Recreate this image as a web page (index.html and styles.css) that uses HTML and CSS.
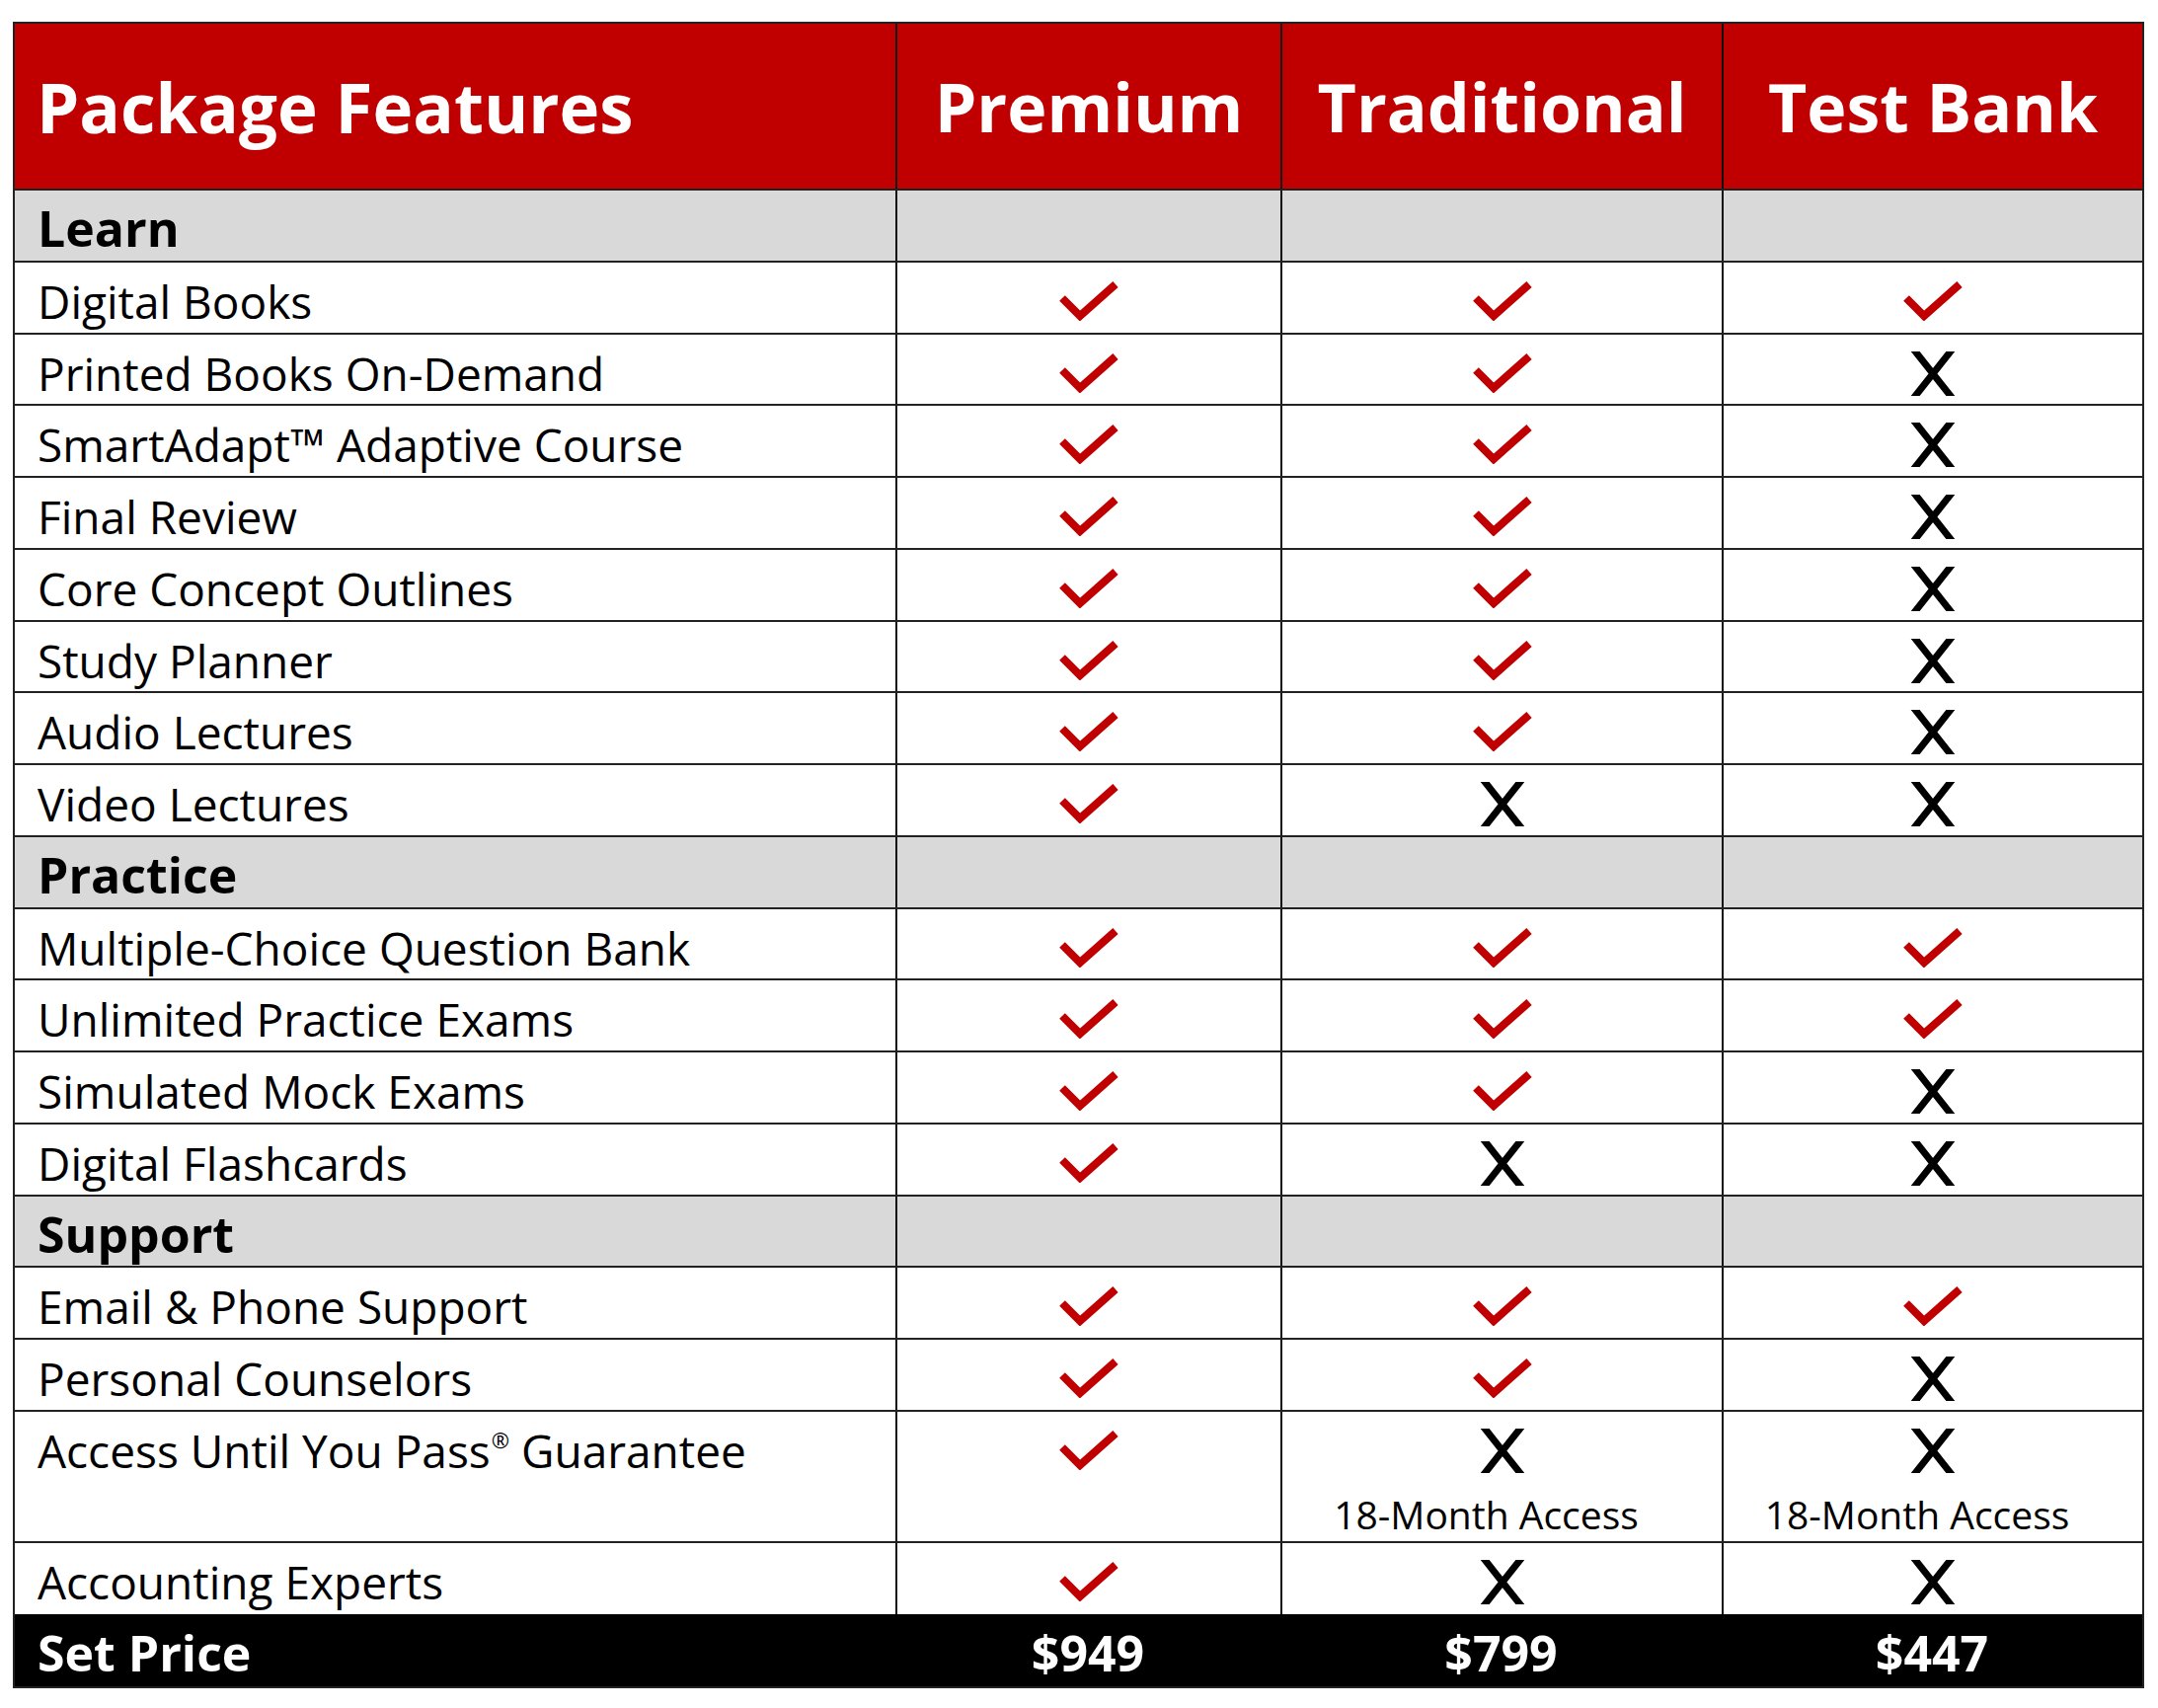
FILE: index.html
```html
<!DOCTYPE html>
<html>
<head>
<meta charset="utf-8">
<link rel="stylesheet" href="styles.css">
<title>Package Features</title>
</head>
<body>
<div class="table">
  <div class="row head">
    <div class="cell feat">Package Features</div>
    <div class="cell">Premium</div>
    <div class="cell">Traditional</div>
    <div class="cell">Test Bank</div>
  </div>

  <div class="row section"><div class="cell feat">Learn</div><div class="cell"></div><div class="cell"></div><div class="cell"></div></div>
  <div class="row"><div class="cell feat">Digital Books</div>
    <div class="cell"><svg class="check" viewBox="0 0 60 40"><path d="M3 17 L21 35 L57 3"/></svg></div>
    <div class="cell"><svg class="check" viewBox="0 0 60 40"><path d="M3 17 L21 35 L57 3"/></svg></div>
    <div class="cell"><svg class="check" viewBox="0 0 60 40"><path d="M3 17 L21 35 L57 3"/></svg></div></div>
  <div class="row"><div class="cell feat">Printed Books On-Demand</div>
    <div class="cell"><svg class="check" viewBox="0 0 60 40"><path d="M3 17 L21 35 L57 3"/></svg></div>
    <div class="cell"><svg class="check" viewBox="0 0 60 40"><path d="M3 17 L21 35 L57 3"/></svg></div>
    <div class="cell"><svg class="cross" viewBox="0 0 46 45"><path d="M2 -4 L44 49 M44 -4 L2 49"/></svg></div></div>
  <div class="row"><div class="cell feat">SmartAdapt™ Adaptive Course</div>
    <div class="cell"><svg class="check" viewBox="0 0 60 40"><path d="M3 17 L21 35 L57 3"/></svg></div>
    <div class="cell"><svg class="check" viewBox="0 0 60 40"><path d="M3 17 L21 35 L57 3"/></svg></div>
    <div class="cell"><svg class="cross" viewBox="0 0 46 45"><path d="M2 -4 L44 49 M44 -4 L2 49"/></svg></div></div>
  <div class="row"><div class="cell feat">Final Review</div>
    <div class="cell"><svg class="check" viewBox="0 0 60 40"><path d="M3 17 L21 35 L57 3"/></svg></div>
    <div class="cell"><svg class="check" viewBox="0 0 60 40"><path d="M3 17 L21 35 L57 3"/></svg></div>
    <div class="cell"><svg class="cross" viewBox="0 0 46 45"><path d="M2 -4 L44 49 M44 -4 L2 49"/></svg></div></div>
  <div class="row"><div class="cell feat">Core Concept Outlines</div>
    <div class="cell"><svg class="check" viewBox="0 0 60 40"><path d="M3 17 L21 35 L57 3"/></svg></div>
    <div class="cell"><svg class="check" viewBox="0 0 60 40"><path d="M3 17 L21 35 L57 3"/></svg></div>
    <div class="cell"><svg class="cross" viewBox="0 0 46 45"><path d="M2 -4 L44 49 M44 -4 L2 49"/></svg></div></div>
  <div class="row"><div class="cell feat">Study Planner</div>
    <div class="cell"><svg class="check" viewBox="0 0 60 40"><path d="M3 17 L21 35 L57 3"/></svg></div>
    <div class="cell"><svg class="check" viewBox="0 0 60 40"><path d="M3 17 L21 35 L57 3"/></svg></div>
    <div class="cell"><svg class="cross" viewBox="0 0 46 45"><path d="M2 -4 L44 49 M44 -4 L2 49"/></svg></div></div>
  <div class="row"><div class="cell feat">Audio Lectures</div>
    <div class="cell"><svg class="check" viewBox="0 0 60 40"><path d="M3 17 L21 35 L57 3"/></svg></div>
    <div class="cell"><svg class="check" viewBox="0 0 60 40"><path d="M3 17 L21 35 L57 3"/></svg></div>
    <div class="cell"><svg class="cross" viewBox="0 0 46 45"><path d="M2 -4 L44 49 M44 -4 L2 49"/></svg></div></div>
  <div class="row"><div class="cell feat">Video Lectures</div>
    <div class="cell"><svg class="check" viewBox="0 0 60 40"><path d="M3 17 L21 35 L57 3"/></svg></div>
    <div class="cell"><svg class="cross" viewBox="0 0 46 45"><path d="M2 -4 L44 49 M44 -4 L2 49"/></svg></div>
    <div class="cell"><svg class="cross" viewBox="0 0 46 45"><path d="M2 -4 L44 49 M44 -4 L2 49"/></svg></div></div>

  <div class="row section"><div class="cell feat">Practice</div><div class="cell"></div><div class="cell"></div><div class="cell"></div></div>
  <div class="row"><div class="cell feat">Multiple-Choice Question Bank</div>
    <div class="cell"><svg class="check" viewBox="0 0 60 40"><path d="M3 17 L21 35 L57 3"/></svg></div>
    <div class="cell"><svg class="check" viewBox="0 0 60 40"><path d="M3 17 L21 35 L57 3"/></svg></div>
    <div class="cell"><svg class="check" viewBox="0 0 60 40"><path d="M3 17 L21 35 L57 3"/></svg></div></div>
  <div class="row"><div class="cell feat">Unlimited Practice Exams</div>
    <div class="cell"><svg class="check" viewBox="0 0 60 40"><path d="M3 17 L21 35 L57 3"/></svg></div>
    <div class="cell"><svg class="check" viewBox="0 0 60 40"><path d="M3 17 L21 35 L57 3"/></svg></div>
    <div class="cell"><svg class="check" viewBox="0 0 60 40"><path d="M3 17 L21 35 L57 3"/></svg></div></div>
  <div class="row"><div class="cell feat">Simulated Mock Exams</div>
    <div class="cell"><svg class="check" viewBox="0 0 60 40"><path d="M3 17 L21 35 L57 3"/></svg></div>
    <div class="cell"><svg class="check" viewBox="0 0 60 40"><path d="M3 17 L21 35 L57 3"/></svg></div>
    <div class="cell"><svg class="cross" viewBox="0 0 46 45"><path d="M2 -4 L44 49 M44 -4 L2 49"/></svg></div></div>
  <div class="row"><div class="cell feat">Digital Flashcards</div>
    <div class="cell"><svg class="check" viewBox="0 0 60 40"><path d="M3 17 L21 35 L57 3"/></svg></div>
    <div class="cell"><svg class="cross" viewBox="0 0 46 45"><path d="M2 -4 L44 49 M44 -4 L2 49"/></svg></div>
    <div class="cell"><svg class="cross" viewBox="0 0 46 45"><path d="M2 -4 L44 49 M44 -4 L2 49"/></svg></div></div>

  <div class="row section"><div class="cell feat">Support</div><div class="cell"></div><div class="cell"></div><div class="cell"></div></div>
  <div class="row"><div class="cell feat">Email &amp; Phone Support</div>
    <div class="cell"><svg class="check" viewBox="0 0 60 40"><path d="M3 17 L21 35 L57 3"/></svg></div>
    <div class="cell"><svg class="check" viewBox="0 0 60 40"><path d="M3 17 L21 35 L57 3"/></svg></div>
    <div class="cell"><svg class="check" viewBox="0 0 60 40"><path d="M3 17 L21 35 L57 3"/></svg></div></div>
  <div class="row"><div class="cell feat">Personal Counselors</div>
    <div class="cell"><svg class="check" viewBox="0 0 60 40"><path d="M3 17 L21 35 L57 3"/></svg></div>
    <div class="cell"><svg class="check" viewBox="0 0 60 40"><path d="M3 17 L21 35 L57 3"/></svg></div>
    <div class="cell"><svg class="cross" viewBox="0 0 46 45"><path d="M2 -4 L44 49 M44 -4 L2 49"/></svg></div></div>
  <div class="row tall"><div class="cell feat">Access Until You Pass<sup>®</sup> Guarantee</div>
    <div class="cell"><svg class="check" viewBox="0 0 60 40"><path d="M3 17 L21 35 L57 3"/></svg></div>
    <div class="cell"><svg class="cross" viewBox="0 0 46 45"><path d="M2 -4 L44 49 M44 -4 L2 49"/></svg><span class="note">18-Month Access</span></div>
    <div class="cell"><svg class="cross" viewBox="0 0 46 45"><path d="M2 -4 L44 49 M44 -4 L2 49"/></svg><span class="note">18-Month Access</span></div></div>
  <div class="row last"><div class="cell feat">Accounting Experts</div>
    <div class="cell"><svg class="check" viewBox="0 0 60 40"><path d="M3 17 L21 35 L57 3"/></svg></div>
    <div class="cell"><svg class="cross" viewBox="0 0 46 45"><path d="M2 -4 L44 49 M44 -4 L2 49"/></svg></div>
    <div class="cell"><svg class="cross" viewBox="0 0 46 45"><path d="M2 -4 L44 49 M44 -4 L2 49"/></svg></div></div>

  <div class="row price">
    <div class="cell feat">Set Price</div>
    <div class="cell">$949</div>
    <div class="cell">$799</div>
    <div class="cell">$447</div>
  </div>
</div>
</body>
</html>
```

FILE: styles.css
```css
html, body {
  margin: 0;
  padding: 0;
  background: #ffffff;
}

body {
  font-family: "Open Sans", "Noto Sans", "Liberation Sans", sans-serif;
  color: #000;
}

.table {
  margin: 22px 0 0 13px;
  width: 2159px;
  box-sizing: border-box;
  border: 2px solid #222;
}

.row {
  display: grid;
  grid-template-columns: 892px 390px 447px 1fr;
  height: 72.75px;
  box-sizing: border-box;
  border-bottom: 2px solid #222;
}

.cell {
  display: flex;
  flex-direction: column;
  align-items: center;
  justify-content: flex-start;
  border-left: 2px solid #111;
  padding-top: 19px;
  box-sizing: border-box;
}

.cell.feat {
  display: block;
  border-left: none;
  padding: 16px 0 0 23px;
  font-size: 46px;
  line-height: 46px;
  white-space: nowrap;
}

.cell.feat sup {
  font-size: 22px;
  line-height: 0;
  vertical-align: 20px;
  margin-left: 1px;
}

.head {
  height: 169px;
  background: #c00000;
  color: #fff;
}

.head .cell {
  justify-content: center;
  padding: 0;
  font-size: 68px;
  line-height: 68px;
  font-weight: 700;
}

.head .cell.feat {
  display: flex;
  align-items: flex-start;
  padding: 0 0 0 22px;
  justify-content: center;
  font-size: 69px;
  line-height: 68px;
}

.section {
  background: #d9d9d9;
}

.section .cell.feat {
  font-weight: 700;
  font-size: 50px;
  line-height: 50px;
  padding-top: 13px;
}

.check {
  width: 60px;
  height: 40px;
  fill: none;
  stroke: #c00000;
  stroke-width: 8;
  stroke-linecap: butt;
  stroke-linejoin: miter;
}

.cross {
  width: 46px;
  height: 45px;
  margin-top: -2px;
  fill: none;
  stroke: #000;
  stroke-width: 7;
}

.tall {
  height: 133px;
}

.note {
  font-size: 39px;
  line-height: 39px;
  margin-top: 22px;
  margin-right: 32px;
  white-space: nowrap;
}

.last {
  height: 72px;
  border-bottom: none;
}

.price {
  height: 73px;
  background: #000;
  color: #fff;
  border-bottom: none;
}

.price .cell {
  border-left: none;
  padding-top: 14px;
  font-size: 50px;
  line-height: 50px;
  font-weight: 700;
}

.price .cell.feat {
  padding-top: 14px;
  font-size: 50px;
  line-height: 50px;
  font-weight: 700;
}
```
